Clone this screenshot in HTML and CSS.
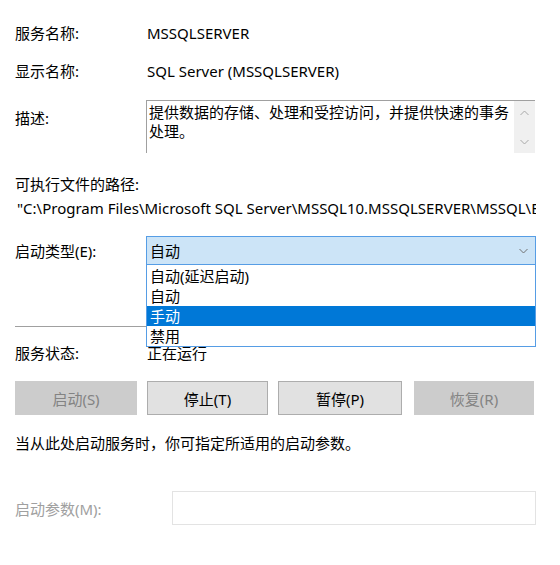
FILE: index.html
```html
<!DOCTYPE html>
<html lang="zh-CN">
<head>
<meta charset="utf-8">
<title>服务属性</title>
<link rel="stylesheet" href="styles.css">
</head>
<body>
<div class="page">
  <div class="row first">
    <div class="label">服务名称:</div>
    <div class="value">MSSQLSERVER</div>
  </div>
  <div class="row second">
    <div class="label">显示名称:</div>
    <div class="value">SQL Server (MSSQLSERVER)</div>
  </div>
  <div class="desc-row">
    <div class="label desc-label">描述:</div>
    <div class="desc-box">
      <div class="desc-text">提供数据的存储、处理和受控访问，并提供快速的事务处理。</div>
      <div class="scrollbar">
        <svg width="9" height="6" viewBox="0 0 9 6"><polyline points="0.5,5 4.5,1 8.5,5" fill="none" stroke="#a8a8a8" stroke-width="1"/></svg>
        <svg width="9" height="6" viewBox="0 0 9 6"><polyline points="0.5,1 4.5,5 8.5,1" fill="none" stroke="#a8a8a8" stroke-width="1"/></svg>
      </div>
    </div>
  </div>
  <div class="path-label">可执行文件的路径:</div>
  <div class="path">"C:\Program Files\Microsoft SQL Server\MSSQL10.MSSQLSERVER\MSSQL\Binn\sqlservr.exe" -sMSSQLSERVER</div>
  <div class="type-row">
    <div class="label type-label">启动类型(E):</div>
    <div class="select">
      <span>自动</span>
      <svg class="chev" width="9" height="6" viewBox="0 0 9 6"><polyline points="0.5,1 4.5,5 8.5,1" fill="none" stroke="#707070" stroke-width="1"/></svg>
      <div class="dropdown">
        <div class="item">自动(延迟启动)</div>
        <div class="item">自动</div>
        <div class="item selected">手动</div>
        <div class="item">禁用</div>
      </div>
    </div>
  </div>
  <div class="sep"></div>
  <div class="row status">
    <div class="label">服务状态:</div>
    <div class="value">正在运行</div>
  </div>
  <div class="buttons">
    <div class="btn disabled">启动(S)</div>
    <div class="btn">停止(T)</div>
    <div class="btn">暂停(P)</div>
    <div class="btn disabled last">恢复(R)</div>
  </div>
  <div class="note">当从此处启动服务时，你可指定所适用的启动参数。</div>
  <div class="param-row">
    <div class="param-label">启动参数(M):</div>
    <div class="param-input"></div>
  </div>
</div>
</body>
</html>
```

FILE: styles.css
```css
* { box-sizing: border-box; }
html, body { margin: 0; background: #ffffff; }
body {
  font-family: "Noto Sans", "Noto Sans CJK SC", sans-serif;
  font-size: 15px;
  color: #000000;
}
.page {
  width: 560px;
  height: 565px;
  padding: 23px 24px 0 15px;
  overflow: hidden;
}
.row {
  display: flex;
  align-items: center;
  height: 20px;
  line-height: 20px;
}
.second { margin-top: 18px; }
.label { width: 132px; flex: none; }
.value { white-space: nowrap; }

.desc-row { display: flex; margin-top: 19px; }
.desc-label { width: 131px; padding-top: 8px; line-height: 20px; }
.desc-box {
  width: 389px;
  height: 53px;
  border-top: 1px solid #a0a0a0;
  border-left: 1px solid #a0a0a0;
  display: flex;
}
.desc-text {
  flex: 1;
  padding: 2px 0 0 2px;
  line-height: 19px;
}
.scrollbar {
  width: 21px;
  flex: none;
  background: #f0f0f0;
  display: flex;
  flex-direction: column;
  justify-content: space-between;
  align-items: center;
  padding: 9px 0 8px;
}
.scrollbar svg { display: block; }

.path-label { margin-top: 21px; line-height: 20px; height: 20px; }
.path {
  margin-top: 4px;
  height: 20px;
  line-height: 20px;
  width: 521px;
  white-space: nowrap;
  overflow: hidden;
  padding-left: 2px;
}

.type-row {
  margin-top: 18px;
  display: flex;
  align-items: center;
  height: 29px;
}
.type-label { width: 131px; }
.select {
  position: relative;
  width: 390px;
  height: 29px;
  background: #cce4f7;
  border: 1px solid #569de5;
  display: flex;
  align-items: center;
  padding-left: 3px;
  line-height: 20px;
}
.chev { position: absolute; right: 7px; top: 11px; }
.dropdown {
  position: absolute;
  left: -1px;
  top: 28px;
  width: 390px;
  background: #ffffff;
  border: 1px solid #569de5;
  border-top: none;
  z-index: 5;
  padding-top: 1px;
}
.item {
  height: 20px;
  line-height: 20px;
  padding-left: 3px;
  white-space: nowrap;
}
.item.selected { background: #0078d7; color: #ffffff; }

.sep { margin-top: 61px; height: 1px; background: #a0a0a0; }
.status { margin-top: 16px; }

.buttons {
  margin-top: 18px;
  display: grid;
  grid-template-columns: 122px 121px 124px 122px;
  column-gap: 10px;
  width: 521px;
}
.btn {
  height: 34px;
  background: #e1e1e1;
  border: 1px solid #adadad;
  display: flex;
  align-items: center;
  justify-content: center;
}
.btn.last { margin-left: 2px; }
.btn.disabled { background: #cccccc; border-color: #cccccc; color: #838383; }

.note { margin-top: 18px; height: 20px; line-height: 20px; }

.param-row {
  margin-top: 38px;
  display: flex;
  align-items: center;
  height: 34px;
}
.param-label { width: 157px; flex: none; color: #a0a0a0; }
.param-input {
  width: 365px;
  height: 34px;
  border: 1px solid #e3e3e3;
  background: #ffffff;
}
```
